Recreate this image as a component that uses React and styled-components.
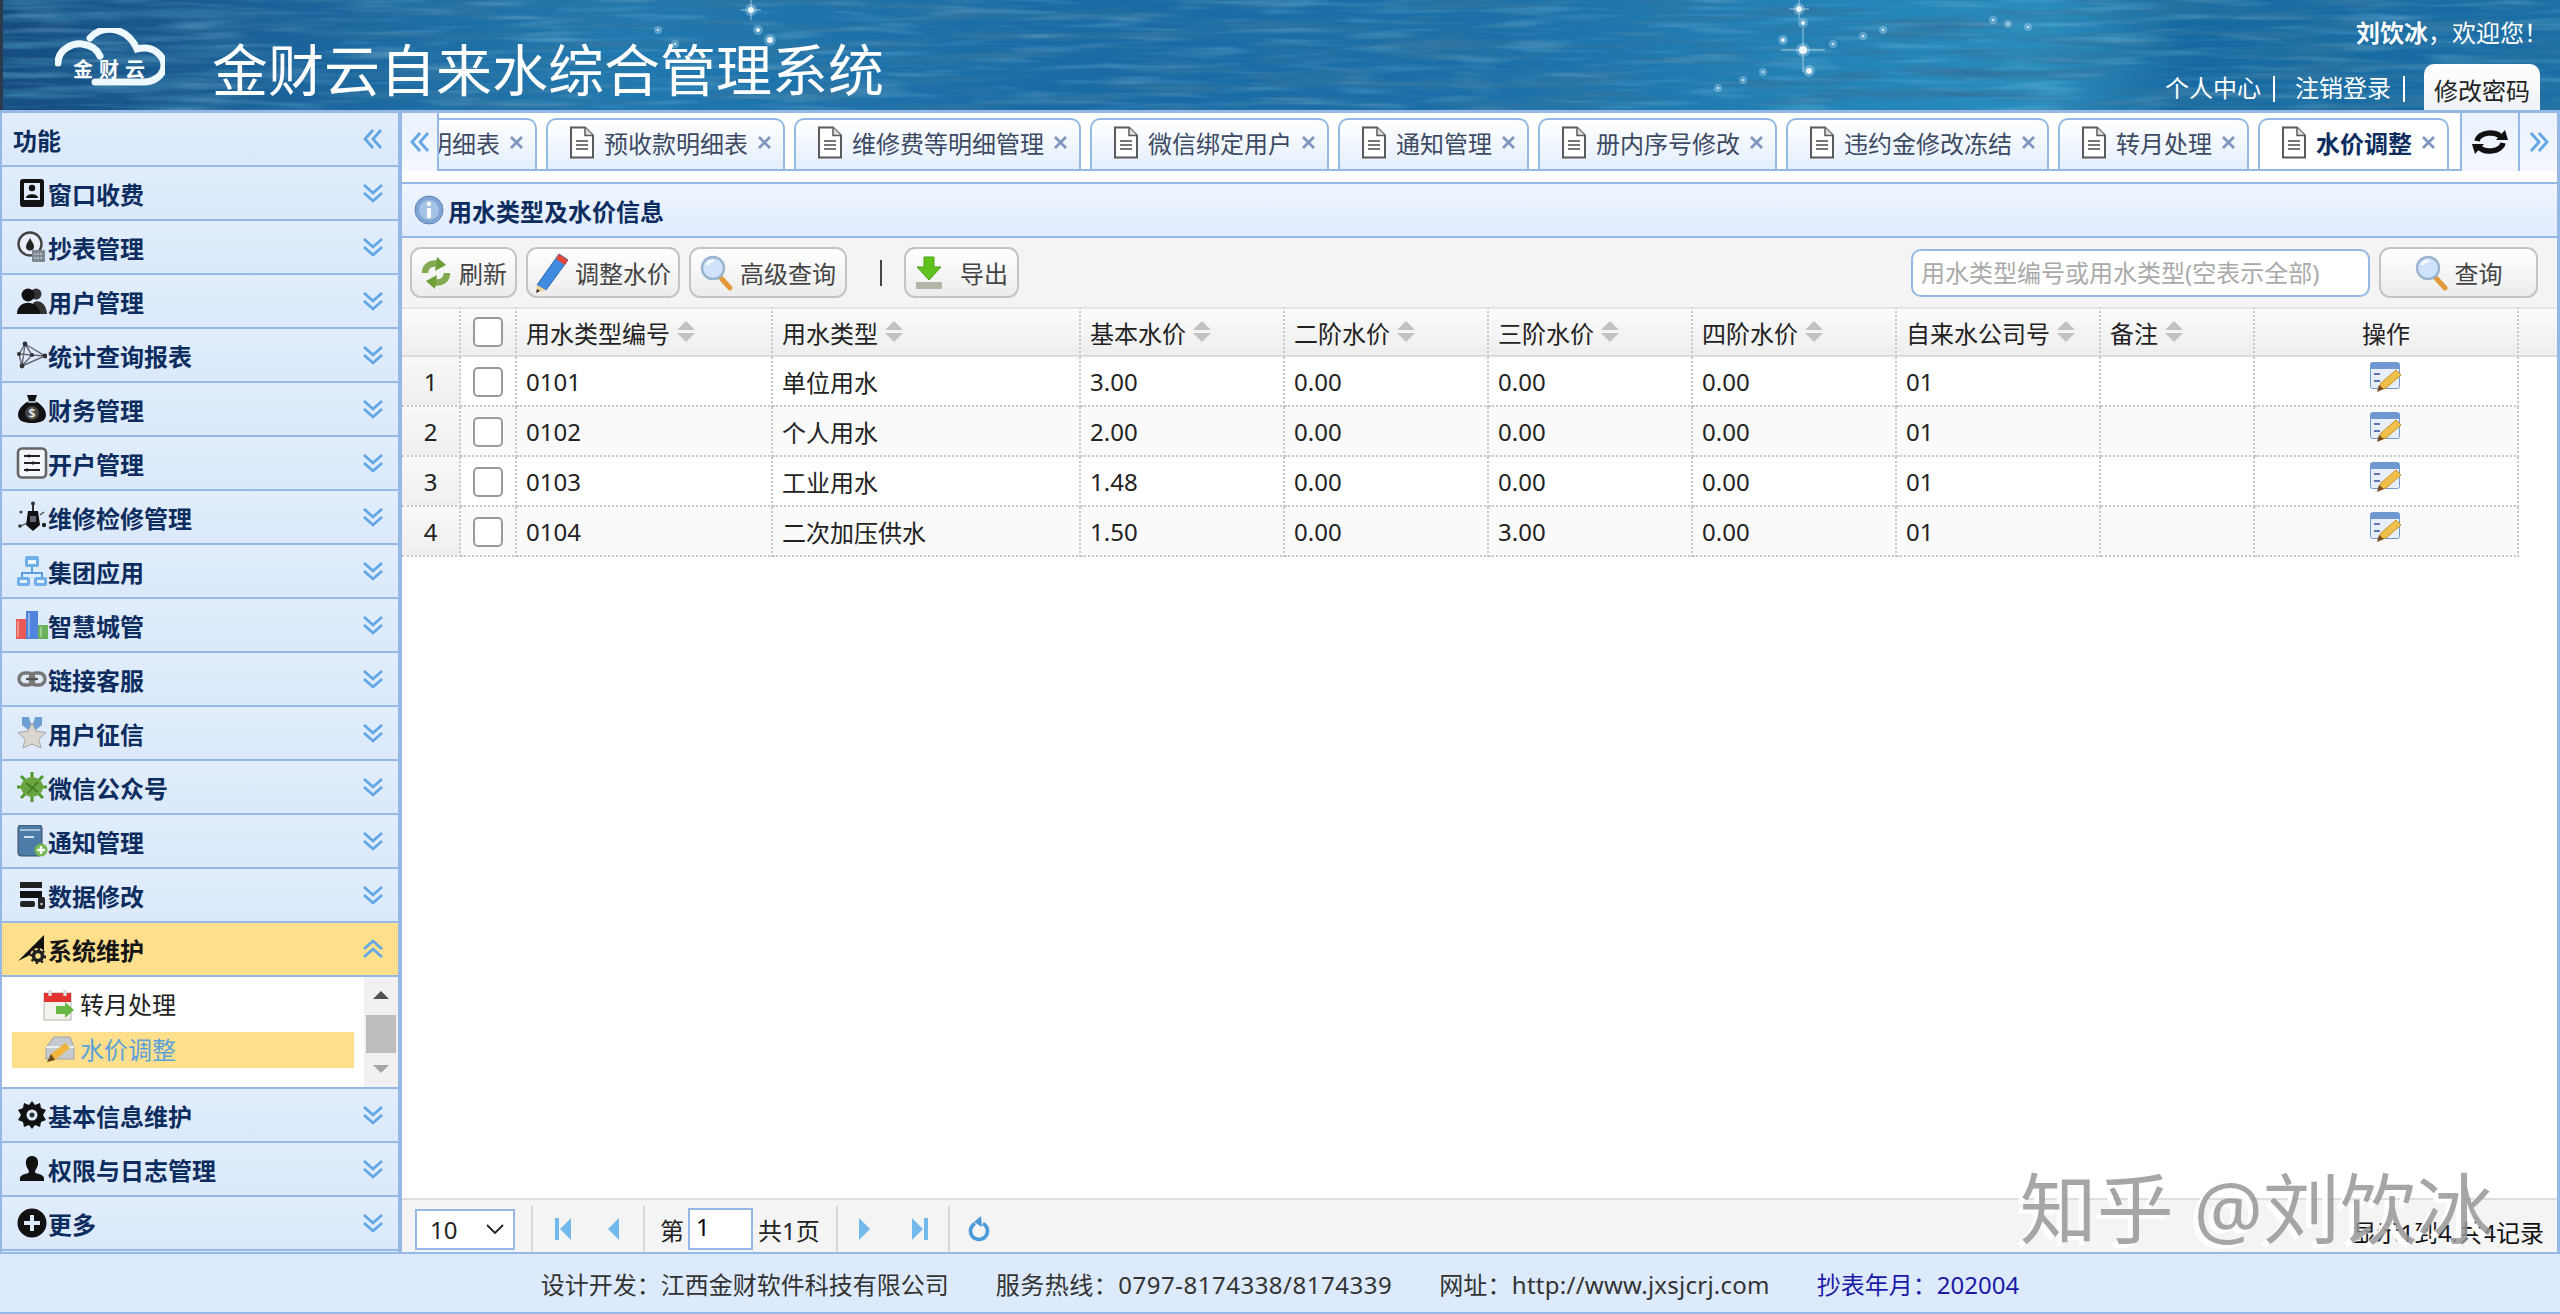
import React from "react";
import styled, { createGlobalStyle } from "styled-components";

const BORDER = "#95b8e7";
const NAVY = "#0e2d5f";

const GlobalStyle = createGlobalStyle`
  html, body {
    margin: 0;
    padding: 0;
    height: 100%;
    overflow: hidden;
  }
  body {
    font-family: "Noto Sans", "Noto Sans CJK SC", sans-serif;
    font-size: 24px;
    color: #222;
  }
  * {
    box-sizing: border-box;
  }
`;

const Page = styled.div`
  position: relative;
  display: flex;
  flex-direction: column;
  width: 2560px;
  height: 1314px;
  overflow: hidden;
`;

/* header */
const Header = styled.header`
  position: relative;
  flex: none;
  display: flex;
  justify-content: space-between;
  height: 110px;
  border-left: 3px solid #2c3b4c;
  overflow: hidden;
`;
const Water = styled.svg`
  position: absolute;
  left: 0;
  top: 0;
`;
const Brand = styled.div`
  position: relative;
  display: flex;
  align-items: flex-start;
  padding: 28px 0 0 52px;
`;
const Title = styled.h1`
  margin: 6px 0 0 47px;
  font-size: 56px;
  line-height: 70px;
  font-weight: 400;
  color: #fff;
  white-space: nowrap;
`;
const UserBox = styled.div`
  position: relative;
  display: flex;
  flex-direction: column;
  align-items: flex-end;
  padding: 16px 20px 0 0;
`;
const Welcome = styled.div`
  height: 34px;
  margin-right: -8px;
  line-height: 34px;
  color: #fff;
  b {
    font-weight: 700;
  }
`;
const UserLinks = styled.div`
  display: flex;
  align-items: flex-end;
  margin-top: 14px;
  color: #fff;
`;
const UserLink = styled.span`
  height: 46px;
  line-height: 48px;
  white-space: pre;
`;
const LinkBar = styled.i`
  width: 2px;
  height: 26px;
  margin: 0 20px 8px 12px;
  background: #fff;
`;
const PasswordTab = styled.span`
  width: 116px;
  height: 46px;
  margin-left: -1px;
  line-height: 54px;
  text-align: center;
  color: #222;
  background: linear-gradient(#fff, #eef2f6);
  border-radius: 10px 10px 0 0;
`;

/* body */
const Body = styled.div`
  flex: 1;
  display: flex;
  min-height: 0;
`;
const Sidebar = styled.nav`
  flex: none;
  width: 402px;
  background: #dceafc;
  border-top: 3px solid ${BORDER};
  border-left: 2px solid ${BORDER};
  border-right: 4px solid ${BORDER};
`;
const NavRow = styled.div`
  display: flex;
  align-items: center;
  height: 54px;
  padding: 0 14px 0 ${(p) => (p.$title ? "11px" : "13px")};
  background: ${(p) => (p.$active ? "#ffdf8b" : "linear-gradient(#e1edfc, #dbe9fb)")};
  border-bottom: 2px solid ${BORDER};
  color: ${(p) => (p.$active ? "#151515" : NAVY)};
  font-weight: 700;
`;
const NavIcon = styled.span`
  flex: none;
  display: flex;
  justify-content: center;
  width: 33px;
`;
const NavLabel = styled.span`
  flex: 1;
`;
const SubPanel = styled.div`
  display: flex;
  height: 112px;
  background: #fff;
  border-bottom: 2px solid ${BORDER};
`;
const SubList = styled.div`
  flex: 1;
  padding: 10px 10px 0 10px;
`;
const SubItem = styled.div`
  display: flex;
  align-items: center;
  height: 36px;
  margin-bottom: 9px;
  padding: 0 0 3px 31px;
  background: ${(p) => (p.$active ? "#ffdf8b" : "transparent")};
  color: ${(p) => (p.$active ? "#5aa2dc" : "#222")};
`;
const SubIcon = styled.span`
  display: flex;
  width: 37px;
  margin-bottom: -3px;
`;
const ScrollTrack = styled.div`
  flex: none;
  display: flex;
  flex-direction: column;
  align-items: center;
  width: 34px;
  padding: 14px 2px 0;
  background: #f1f1f1;
`;
const ScrollArrow = styled.i`
  width: 0;
  height: 0;
  border-left: 8px solid transparent;
  border-right: 8px solid transparent;
  border-bottom: ${(p) => (p.$down ? "0" : "8px solid #505050")};
  border-top: ${(p) => (p.$down ? "8px solid #a5a5a5" : "0")};
`;
const ScrollThumb = styled.i`
  width: 30px;
  height: 38px;
  margin: 16px 0 12px;
  background: #bdbdbd;
`;

/* main column */
const Main = styled.main`
  flex: 1;
  min-width: 0;
  display: flex;
  flex-direction: column;
  background: #fff;
  border-top: 3px solid ${BORDER};
  border-right: 3px solid ${BORDER};
`;
const TabStrip = styled.div`
  flex: none;
  display: flex;
  height: 58px;
  border-bottom: 2px solid ${BORDER};
`;
const Scroller = styled.div`
  flex: none;
  display: flex;
  align-items: center;
  justify-content: center;
  width: ${(p) => p.$w}px;
  margin-bottom: -2px;
  background: linear-gradient(#eaf2fe, #f4f8fe);
  border-${(p) => p.$edge}: 2px solid ${BORDER};
`;
const TabClip = styled.div`
  flex: 1;
  min-width: 0;
  display: flex;
  align-items: flex-end;
  gap: 9px;
  padding-top: 5px;
  overflow: hidden;
`;
const Tab = styled.div`
  flex: none;
  display: flex;
  align-items: center;
  height: 53px;
  margin-bottom: -2px;
  padding: 0 11px 4px 21px;
  color: ${(p) => (p.$active ? NAVY : "#3d4a63")};
  font-weight: ${(p) => (p.$active ? 700 : 400)};
  background: ${(p) => (p.$active ? "#fff" : "linear-gradient(#fff, #e3eefc)")};
  border: 2px solid ${BORDER};
  border-bottom: 2px solid ${(p) => (p.$active ? "#fff" : BORDER)};
  border-radius: 10px 10px 0 0;
  white-space: nowrap;
`;
const ClippedTab = styled(Tab)`
  justify-content: flex-end;
  width: 98px;
  padding-left: 0;
  border-left: 0;
  border-top-left-radius: 0;
  span {
    flex: none;
    margin-left: -40px;
  }
`;
const TabText = styled.span`
  margin: 0 9px;
`;
const ClippedClose = styled.i`
  display: flex;
  margin-left: 9px;
`;

const Panel = styled.section`
  flex: 1;
  min-height: 0;
  display: flex;
  flex-direction: column;
  margin-top: 11px;
`;
const PanelTitle = styled.div`
  flex: none;
  display: flex;
  align-items: center;
  gap: 4px;
  height: 56px;
  padding-left: 12px;
  background: linear-gradient(#eff5ff, #e0ecff);
  border-top: 2px solid ${BORDER};
  border-bottom: 2px solid ${BORDER};
  color: ${NAVY};
  font-weight: 700;
`;
const Toolbar = styled.div`
  flex: none;
  display: flex;
  align-items: center;
  gap: 9px;
  height: 69px;
  padding: 0 19px 0 8px;
  background: #f4f4f4;
`;
const ToolButton = styled.button`
  display: flex;
  align-items: center;
  justify-content: center;
  gap: ${(p) => p.$gap}px;
  width: ${(p) => p.$w}px;
  height: 51px;
  padding: 0;
  font: inherit;
  color: #444;
  background: linear-gradient(#fff, #ececec);
  border: 2px solid #c4c4c4;
  border-radius: 11px;
`;
const ToolSep = styled.i`
  width: 2px;
  height: 26px;
  margin: 0 13px 0 24px;
  background: #444;
`;
const SearchInput = styled.input`
  width: 459px;
  height: 48px;
  margin-left: auto;
  padding: 0 8px;
  font: inherit;
  background: #fff;
  border: 2px solid ${BORDER};
  border-radius: 10px;
  outline: none;
  &::placeholder {
    color: #aaa;
    opacity: 1;
  }
`;

const TableArea = styled.div`
  flex: 1;
  min-height: 0;
`;
const Grid = styled.table`
  table-layout: fixed;
  width: 2155px;
  border-collapse: separate;
  border-spacing: 0;
`;
const HeadCell = styled.th`
  height: 50px;
  padding: 0 0 0 ${(p) => (p.$flush ? "0" : "9px")};
  font-weight: 400;
  text-align: left;
  background: linear-gradient(#fbfbfb, #eeeeee);
  border-top: 2px solid #e4e4e4;
  border-bottom: 2px solid #dcdcdc;
  border-right: ${(p) => (p.$plain ? "0" : "2px dotted #c8c8c8")};
`;
const HeadInner = styled.div`
  display: flex;
  align-items: center;
  justify-content: ${(p) => (p.$center ? "center" : "flex-start")};
  gap: 7px;
  white-space: nowrap;
`;
const SortMark = styled.span`
  display: flex;
  flex-direction: column;
  gap: 3px;
  margin-top: -2px;
  &::before,
  &::after {
    content: "";
    width: 0;
    height: 0;
    border-left: 9px solid transparent;
    border-right: 9px solid transparent;
  }
  &::before {
    border-bottom: 9px solid #c2c2c2;
  }
  &::after {
    border-top: 9px solid #c2c2c2;
  }
`;
const Cell = styled.td`
  height: 50px;
  padding: 0 0 0 9px;
  background: ${(p) => (p.$odd ? "#fff" : "#fafafa")};
  border-bottom: 2px dotted #c8c8c8;
  border-right: 2px dotted #c8c8c8;
`;
const NumCell = styled(Cell)`
  padding: 0;
  text-align: center;
  background: linear-gradient(#f8f8f8, #efefef);
`;
const BoxCell = styled(Cell)`
  padding: 2px 0 0;
  text-align: center;
`;
const Check = styled.input.attrs({ type: "checkbox" })`
  appearance: none;
  display: block;
  width: 30px;
  height: 30px;
  margin: 0 auto;
  background: #fff;
  border: 2px solid #9a9a9a;
  border-radius: 5px;
`;
const ActionCell = styled(Cell)`
  padding: 0 0 8px;
  text-align: center;
`;

const Pager = styled.div`
  flex: none;
  display: flex;
  align-items: center;
  height: 54px;
  padding: 6px 13px 0 13px;
  background: #f4f4f4;
  border-top: 2px solid #dedede;
`;
const SizeBox = styled.div`
  position: relative;
  width: 100px;
  height: 41px;
  margin-right: 15px;
`;
const PageSize = styled.select`
  appearance: none;
  width: 100%;
  height: 100%;
  padding-left: 13px;
  font: inherit;
  color: #222;
  background: #fff;
  border: 2px solid ${BORDER};
  border-radius: 0;
  outline: none;
`;
const SizeCaret = styled.svg`
  position: absolute;
  right: 11px;
  top: 15px;
  pointer-events: none;
`;
const PagerSep = styled.i`
  align-self: stretch;
  width: 2px;
  margin: 0 3px 0 1px;
  background: #d8d8d8;
`;
const PagerBtn = styled.span`
  display: flex;
  align-items: center;
  justify-content: center;
  width: 53px;
`;
const PageNumbers = styled.div`
  display: flex;
  align-items: center;
  padding: 0 15px 0 12px;
`;
const PageInput = styled.input`
  width: 65px;
  height: 42px;
  margin: 0 5px 0 4px;
  padding: 0 0 6px 6px;
  font: inherit;
  background: #fff;
  border: 2px solid ${BORDER};
  outline: none;
`;
const RecordInfo = styled.span`
  margin: 4px 0 0 auto;
  color: #111;
`;

const Footer = styled.footer`
  flex: none;
  display: flex;
  align-items: center;
  justify-content: center;
  gap: 47px;
  height: 62px;
  color: #333;
  background: #dceafc;
  border-top: 2px solid ${BORDER};
  border-bottom: 2px solid ${BORDER};
`;
const FooterItem = styled.span`
  letter-spacing: ${(p) => p.$track || 0}px;
  color: ${(p) => (p.$month ? "#1a1aa6" : "inherit")};
`;
const Watermark = styled.div`
  position: absolute;
  right: 66px;
  top: 1161px;
  font-size: 77px;
  line-height: 96px;
  color: rgba(150, 150, 150, 0.85);
  text-shadow: -5px 4px 0 #fff;
  white-space: pre;
  pointer-events: none;
`;

/* drawings */
const Sparkle = ({ x, y, r = 3, arm = 14 }) => (
  <g>
    <circle cx={x} cy={y} r={r + 3} fill="#bfe6ff" opacity="0.35" />
    <circle cx={x} cy={y} r={r} fill="#fff" opacity="0.9" />
    {arm > 8 && <path d={`M${x - arm} ${y}H${x + arm}M${x} ${y - arm}V${y + arm}`} stroke="#e6f6ff" strokeWidth="1" opacity="0.6" />}
  </g>
);

const sparkles = [
  [748, 10, 3, 10], [755, 30, 2, 6], [767, 40, 3, 6], [655, 30, 1, 4], [672, 44, 1, 4],
  [1796, 9, 3, 10], [1800, 23, 2, 6], [1780, 40, 2, 6], [1800, 50, 4, 22], [1806, 71, 3, 6], [1830, 44, 1, 5],
  [1860, 36, 1, 5], [1880, 30, 1, 4], [1760, 72, 1, 4], [1740, 80, 1, 4], [1715, 88, 1, 4],
  [1990, 20, 1, 3], [2005, 24, 1, 3], [2025, 27, 1, 3],
];

const WaterBackdrop = () => (
  <Water width="2560" height="110" viewBox="0 0 2560 110" aria-hidden="true">
    <defs>
      <linearGradient id="sea" x1="0" x2="1" y1="0" y2="0">
        <stop offset="0" stopColor="#164c7f" />
        <stop offset="0.1" stopColor="#1a6199" />
        <stop offset="0.24" stopColor="#2079b0" />
        <stop offset="0.42" stopColor="#1a6aa4" />
        <stop offset="0.58" stopColor="#1b6fa8" />
        <stop offset="0.7" stopColor="#2282b6" />
        <stop offset="0.8" stopColor="#2a8dbd" />
        <stop offset="0.85" stopColor="#176aa1" />
        <stop offset="1" stopColor="#1a6ea5" />
      </linearGradient>
      <filter id="ripple" x="0" y="0" width="100%" height="100%">
        <feTurbulence type="fractalNoise" baseFrequency="0.008 0.1" numOctaves="3" seed="11" />
        <feColorMatrix values="0 0 0 0 0.03  0 0 0 0 0.18  0 0 0 0 0.36  2.4 0 0 0 -1.0" />
      </filter>
      <filter id="glint" x="0" y="0" width="100%" height="100%">
        <feTurbulence type="fractalNoise" baseFrequency="0.012 0.14" numOctaves="2" seed="4" />
        <feColorMatrix values="0 0 0 0 0.4  0 0 0 0 0.72  0 0 0 0 0.88  0 2.2 0 0 -1.1" />
      </filter>
    </defs>
    <rect width="2560" height="110" fill="url(#sea)" />
    <rect width="2560" height="110" filter="url(#ripple)" />
    <rect width="2560" height="110" filter="url(#glint)" opacity="0.3" />
    {sparkles.map(([x, y, r, arm]) => (
      <Sparkle key={`${x}-${y}`} x={x} y={y} r={r} arm={arm} />
    ))}
  </Water>
);

const CloudLogo = () => (
  <svg width="110" height="59" viewBox="15 8 110 59" style={{ flex: "none" }}>
    <g fill="none" stroke="#eef8ff" strokeWidth="7" strokeLinecap="round">
      <path d="M18 43C18 29 33 23 42 24C50 25 57 29 60 36" />
      <path d="M50 18C61 5 86 5 97 29C115 24 124 38 124 45C124 56 113 62 104 62H55" />
    </g>
    <text x="33" y="57" fill="#fff" fontSize="20" fontWeight="700" fontFamily="'Noto Sans CJK SC', sans-serif" letterSpacing="6">
      金财云
    </text>
  </svg>
);

const DoubleChevron = ({ dir = "down" }) => {
  const angle = { down: 0, up: 180, left: 90, right: 270 }[dir];
  return (
    <svg width="22" height="22" viewBox="0 0 22 22" style={{ flex: "none" }}>
      <g transform={`rotate(${angle} 11 11)`} fill="none" stroke="#62a6e6" strokeWidth="2.800">
        <path d="M2 3L11 11L20 3" />
        <path d="M2 11L11 19L20 11" />
      </g>
    </svg>
  );
};

const IconWindow = () => (
  <svg width="30" height="30" viewBox="0 0 30 30">
    <rect x="3" y="1" width="24" height="28" rx="3" fill="#111" />
    <rect x="7" y="5" width="16" height="17" fill="#e0ebfb" />
    <circle cx="15" cy="10" r="3.200" fill="#111" />
    <path d="M9 20C9 15 21 15 21 20Z" fill="#111" />
  </svg>
);
const IconMeter = () => (
  <svg width="30" height="32" viewBox="0 0 30 32">
    <circle cx="13" cy="13" r="11.500" fill="#e8eefa" stroke="#444" strokeWidth="2.400" />
    <path d="M13 7C15 11 17 13 17 15.500A4 4 0 0 1 9 15.500C9 13 11 11 13 7Z" fill="#222" />
    <rect x="15" y="19" width="13" height="12" rx="1" fill="#7f8790" />
    <path d="M17 23H26M17 27H26" stroke="#c5ccd6" strokeWidth="1.600" strokeDasharray="2 1" />
  </svg>
);
const IconUsers = () => (
  <svg width="30" height="28" viewBox="0 0 30 28">
    <circle cx="19" cy="7" r="5.500" fill="#333" />
    <path d="M16 16C20 12 29 14 30 27H22Z" fill="#333" />
    <circle cx="11" cy="8" r="6.500" fill="#111" />
    <path d="M0 27C0 12 22 12 23 27Z" fill="#111" />
  </svg>
);
const IconNetwork = () => (
  <svg width="30" height="28" viewBox="0 0 30 28">
    <g fill="none" stroke="#667" strokeWidth="1.400">
      <path d="M8 3L28 15L5 25ZM8 3L15 14L5 25M15 14L28 15M2 13L15 14M8 3L2 13L5 25" />
    </g>
    <g fill="#333">
      <circle cx="8" cy="3" r="2.400" />
      <circle cx="28" cy="15" r="2.400" />
      <circle cx="5" cy="25" r="2.400" />
      <circle cx="2" cy="13" r="2" />
      <circle cx="15" cy="14" r="2" />
    </g>
  </svg>
);
const IconMoney = () => (
  <svg width="30" height="30" viewBox="0 0 30 30">
    <path d="M10 1H20L18 7C24 10 29 15 29 21C29 27 23 29 15 29C7 29 1 27 1 21C1 15 6 10 12 7Z" fill="#111" />
    <path d="M11 8H19" stroke="#dce9fb" strokeWidth="1.400" />
    <circle cx="15" cy="19" r="7" fill="#444" />
    <text x="15" y="24" fontSize="13" fontWeight="700" fill="#ddd" textAnchor="middle">$</text>
  </svg>
);
const IconList = () => (
  <svg width="32" height="32" viewBox="0 0 32 32">
    <rect x="2" y="1.500" width="28" height="29" rx="4" fill="#f4f7fc" stroke="#666" strokeWidth="2.600" />
    <path d="M8 9H24M8 16H24M8 23H24" stroke="#222" strokeWidth="2" />
    <path d="M13 7.500V10.500M17 14.500V17.500M11 21.500V24.500" stroke="#222" strokeWidth="2" />
  </svg>
);
const IconRepair = () => (
  <svg width="30" height="32" viewBox="0 0 30 32">
    <path d="M11 10H21L23 24L16 30L9 24Z" fill="#111" />
    <rect x="13" y="15" width="6" height="6" fill="#667" />
    <path d="M16 1V10" stroke="#333" strokeWidth="2" />
    <circle cx="16" cy="2.500" r="2" fill="#333" />
    <circle cx="4" cy="11" r="1.600" fill="#444" />
    <circle cx="27" cy="24" r="2.200" fill="#222" />
    <circle cx="3" cy="25" r="1.800" fill="#333" />
    <path d="M4 25L10 22M23 14L27 11" stroke="#444" strokeWidth="1.200" />
  </svg>
);
const IconOrg = () => (
  <svg width="32" height="32" viewBox="0 0 32 32">
    <path d="M16 12V18M6 24V18H26V24" fill="none" stroke="#5a9fe0" strokeWidth="2" />
    <rect x="9" y="1" width="14" height="11" rx="2" fill="#6fb0ec" />
    <rect x="12" y="5" width="8" height="4" fill="#eaf4ff" />
    <rect x="1" y="22" width="13" height="9" rx="2" fill="#6fb0ec" />
    <rect x="4" y="25" width="7" height="3" fill="#eaf4ff" />
    <rect x="18" y="22" width="13" height="9" rx="2" fill="#6fb0ec" />
    <rect x="21" y="25" width="7" height="3" fill="#eaf4ff" />
  </svg>
);
const IconBars = () => (
  <svg width="32" height="28" viewBox="0 0 32 28">
    <rect x="0" y="8" width="10" height="20" fill="#ea5a55" />
    <rect x="10" y="0" width="12" height="28" fill="#4f86dc" />
    <rect x="22" y="14" width="10" height="14" fill="#6cb25c" />
    <path d="M2 10V26M13 2V26M25 16V26" stroke="#fff" strokeWidth="1.500" opacity="0.45" />
  </svg>
);
const IconChain = () => (
  <svg width="30" height="16" viewBox="0 0 30 16">
    <g fill="none" stroke="#777" strokeWidth="3.400">
      <rect x="2" y="2" width="15" height="12" rx="6" />
      <rect x="13" y="2" width="15" height="12" rx="6" />
    </g>
    <path d="M9 8H21" stroke="#555" strokeWidth="2" />
  </svg>
);
const IconMedal = () => (
  <svg width="30" height="32" viewBox="0 0 30 32">
    <path d="M5 0H12L15 10L18 0H25V8L15 16L5 8Z" fill="#6f9ed6" />
    <path d="M15 6L19 14L29 15.500L22 22.500L24 31L15 27L6 31L8 22.500L1 15.500L11 14Z" fill="#d9d5cf" stroke="#a8a6a2" strokeWidth="1" />
  </svg>
);
const IconBug = () => (
  <svg width="32" height="32" viewBox="0 0 32 32">
    <path d="M16 1V31M1 16H31M5 5L27 27M27 5L5 27" stroke="#4e9a2c" strokeWidth="3" />
    <ellipse cx="16" cy="16" rx="11" ry="10" fill="#6aa53f" />
    <path d="M10 12L22 21M12 22L22 11" stroke="#3f7c22" strokeWidth="1.600" />
  </svg>
);
const IconBook = () => (
  <svg width="32" height="32" viewBox="0 0 32 32">
    <rect x="2" y="0" width="24" height="31" rx="3" fill="#4d7ca8" stroke="#3c4c60" strokeWidth="1" />
    <path d="M4 5H24" stroke="#a7c2da" strokeWidth="2" />
    <rect x="8" y="11" width="10" height="2" fill="#cfe0ee" />
    <circle cx="25" cy="25" r="6.500" fill="#74b84f" />
    <path d="M25 21V29M21 25H29" stroke="#fff" strokeWidth="2.400" />
  </svg>
);
const IconServer = () => (
  <svg width="30" height="30" viewBox="0 0 30 30">
    <rect x="3" y="2" width="22" height="6" fill="#222" />
    <rect x="3" y="11" width="22" height="7" fill="#111" />
    <rect x="3" y="21" width="15" height="6" rx="2" fill="#222" />
    <rect x="21" y="17" width="7" height="12" rx="2" fill="#222" />
    <circle cx="24.500" cy="24" r="1.200" fill="#ddd" />
  </svg>
);
const IconTools = () => (
  <svg width="30" height="30" viewBox="0 0 30 30">
    <path d="M27 1V19L15 20L1 27Z" fill="#111" />
    <circle cx="21" cy="22" r="8" fill="#ffdf8b" />
    <circle cx="21" cy="22" r="4.500" fill="none" stroke="#222" strokeWidth="3.600" />
    <circle cx="21" cy="22" r="7" fill="none" stroke="#222" strokeWidth="2.200" strokeDasharray="2.400 3" />
  </svg>
);
const IconGear = () => (
  <svg width="30" height="30" viewBox="0 0 30 30">
    <path
      d="M15 1L18 5L23 3L24 8L29 10L26 15L29 20L24 22L23 27L18 25L15 29L12 25L7 27L6 22L1 20L4 15L1 10L6 8L7 3L12 5Z"
      fill="#111"
    />
    <circle cx="15" cy="15" r="5.500" fill="#dce9fb" />
    <circle cx="15" cy="15" r="2.500" fill="#333" />
  </svg>
);
const IconPerson = () => (
  <svg width="26" height="26" viewBox="0 0 26 26">
    <path d="M13 0C18 0 19.500 4 19 8C18.500 12 16 14 16 16C16 18 25 18 25 22V25H1V22C1 18 10 18 10 16C10 14 7.500 12 7 8C6.500 4 8 0 13 0Z" fill="#111" />
  </svg>
);
const IconPlus = () => (
  <svg width="30" height="30" viewBox="0 0 30 30">
    <circle cx="15" cy="15" r="14.500" fill="#111" />
    <path d="M15 7V23M7 15H23" stroke="#dce9fb" strokeWidth="4" />
  </svg>
);

const IconCalendar = () => (
  <svg width="32" height="32" viewBox="0 0 32 32">
    <rect x="1" y="4" width="27" height="27" fill="#f3f3ee" stroke="#b5b5b0" />
    <rect x="1" y="4" width="27" height="9" fill="#e2342f" />
    <path d="M7 1V7M22 1V7" stroke="#ddd" strokeWidth="3.400" />
    <path d="M13 17H22V13L31 21L22 29V25H13Z" fill="#68b845" />
  </svg>
);
const IconPriceEdit = () => (
  <svg width="32" height="30" viewBox="0 0 32 30">
    <path d="M3 12L11 2H27L31 12V24H3Z" fill="#c6c9cd" stroke="#a0a4a8" />
    <path d="M3 12H31" stroke="#eee" strokeWidth="2" />
    <path d="M4 27L8 19L22 8L27 13L12 25Z" fill="#efb53c" />
    <path d="M4 27L8 19L12 25Z" fill="#6b4a20" />
  </svg>
);
const IconDoc = () => (
  <svg width="26" height="33" viewBox="0 0 26 33" style={{ flex: "none" }}>
    <path d="M2 1.500H16L24 9.500V31.500H2Z" fill="#fff" stroke="#5a5a5a" strokeWidth="2" />
    <path d="M16 1.500V9.500H24" fill="#ddd" stroke="#5a5a5a" strokeWidth="1.500" />
    <path d="M7 15H19M7 19H19M7 23H19" stroke="#777" strokeWidth="1.800" />
  </svg>
);
const IconClose = () => (
  <svg width="15" height="15" viewBox="0 0 15 15" style={{ flex: "none" }}>
    <path d="M2 2L13 13M13 2L2 13" stroke="#7d95bd" strokeWidth="2.600" />
  </svg>
);
const IconCycle = () => (
  <svg width="36" height="26" viewBox="0 0 36 26">
    <g fill="none" stroke="#111" strokeWidth="5.500">
      <path d="M5 12C7 3 24 1 30 9" />
      <path d="M31 14C29 23 12 25 6 17" />
    </g>
    <path d="M24 11L36 11L33 1Z" fill="#111" />
    <path d="M12 15L0 15L3 25Z" fill="#111" />
  </svg>
);
const IconInfo = () => (
  <svg width="30" height="30" viewBox="0 0 30 30" style={{ flex: "none" }}>
    <circle cx="15" cy="15" r="14" fill="#7ea5d3" stroke="#5e86b8" />
    <circle cx="15" cy="15" r="10" fill="#a5c3e4" />
    <circle cx="15" cy="9" r="2.200" fill="#fff" />
    <rect x="13" y="13" width="4" height="10" fill="#fff" />
  </svg>
);
const IconRefresh = () => (
  <svg width="32" height="34" viewBox="0 0 32 34">
    <g fill="none" stroke="#84ab52" strokeWidth="6.500">
      <path d="M5 17C5 10 11 6 19 8" />
      <path d="M27 17C27 24 21 28 13 26" />
    </g>
    <path d="M17 1L26 9L15 15Z" fill="#6d9e38" />
    <path d="M15 33L6 25L17 19Z" fill="#6d9e38" />
  </svg>
);
const IconPencil = () => (
  <svg width="34" height="42" viewBox="0 0 34 42">
    <path d="M24 2L33 8L11 38L2 33Z" fill="#3f8be0" stroke="#2a67b4" />
    <path d="M24 2L33 8L30 13L21 7Z" fill="#e5483a" />
    <path d="M2 33L11 38L1 41Z" fill="#f0d29a" />
    <path d="M2 37L5 39L1 41Z" fill="#333" />
  </svg>
);
const IconSearch = () => (
  <svg width="34" height="36" viewBox="0 0 34 36" style={{ flex: "none" }}>
    <path d="M20 22L30 33" stroke="#e39a3a" strokeWidth="5" strokeLinecap="round" />
    <circle cx="13" cy="13" r="11" fill="#cfe4fa" stroke="#9ab4cf" strokeWidth="2.400" />
    <path d="M7 10C8 7 11 6 14 6" stroke="#fff" strokeWidth="2.400" fill="none" />
  </svg>
);
const IconExport = () => (
  <svg width="28" height="34" viewBox="0 0 28 34">
    <path d="M9 1H19V11H26L14 24L2 11H9Z" fill="#5fc21e" stroke="#4ba012" />
    <rect x="1" y="26" width="26" height="7" rx="1" fill="#b5b5a8" />
  </svg>
);
const IconRowEdit = () => (
  <svg width="32" height="30" viewBox="0 0 32 30" style={{ display: "block", margin: "0 auto" }}>
    <rect x="0.500" y="0.500" width="29" height="26" rx="2" fill="#e8eefa" stroke="#6f98d0" />
    <rect x="1" y="1" width="28" height="6" fill="#6f98d0" />
    <rect x="4" y="11" width="6" height="2" fill="#6176b0" />
    <rect x="4" y="18" width="6" height="2" fill="#6176b0" />
    <path d="M8 28L11 21L26 8L31 13L16 26Z" fill="#f0c04c" stroke="#c8922c" />
    <path d="M7 30L9 23L14 27Z" fill="#7a4c1e" />
  </svg>
);
const PagerGlyph = ({ kind }) => {
  const blue = "#72b8ea";
  const shapes = {
    first: "M0 1H4V23H0ZM16 1V23L5 12Z",
    prev: "M11 1V23L0 12Z",
    next: "M0 1V23L11 12Z",
    last: "M0 1V23L11 12ZM12 1H16V23H12Z",
  };
  return (
    <svg width="16" height="24" viewBox="0 0 16 24">
      <path d={shapes[kind]} fill={blue} />
    </svg>
  );
};
const IconReload = () => (
  <svg width="22" height="26" viewBox="0 0 22 26">
    <path d="M7 7.500A8.500 8.500 0 1 0 15 7.500" fill="none" stroke="#4a9ad8" strokeWidth="3.600" />
    <path d="M13 0L14 11L6 6Z" fill="#4a9ad8" />
  </svg>
);

const navTop = [
  ["窗口收费", IconWindow],
  ["抄表管理", IconMeter],
  ["用户管理", IconUsers],
  ["统计查询报表", IconNetwork],
  ["财务管理", IconMoney],
  ["开户管理", IconList],
  ["维修检修管理", IconRepair],
  ["集团应用", IconOrg],
  ["智慧城管", IconBars],
  ["链接客服", IconChain],
  ["用户征信", IconMedal],
  ["微信公众号", IconBug],
  ["通知管理", IconBook],
  ["数据修改", IconServer],
];
const navBottom = [
  ["基本信息维护", IconGear],
  ["权限与日志管理", IconPerson],
  ["更多", IconPlus],
];

const tabs = ["预收款明细表", "维修费等明细管理", "微信绑定用户", "通知管理", "册内序号修改", "违约金修改冻结", "转月处理"];

const columns = [
  ["用水类型编号", 256],
  ["用水类型", 308],
  ["基本水价", 204],
  ["二阶水价", 204],
  ["三阶水价", 204],
  ["四阶水价", 204],
  ["自来水公司号", 204],
  ["备注", 154],
];

const rows = [
  ["0101", "单位用水", "3.00", "0.00", "0.00", "0.00", "01", ""],
  ["0102", "个人用水", "2.00", "0.00", "0.00", "0.00", "01", ""],
  ["0103", "工业用水", "1.48", "0.00", "0.00", "0.00", "01", ""],
  ["0104", "二次加压供水", "1.50", "0.00", "3.00", "0.00", "01", ""],
];

const NavItem = ({ label, Icon }) => (
  <NavRow>
    <NavIcon>
      <Icon />
    </NavIcon>
    <NavLabel>{label}</NavLabel>
    <DoubleChevron />
  </NavRow>
);

export default function App() {
  return (
    <Page>
      <GlobalStyle />
      <Header>
        <WaterBackdrop />
        <Brand>
          <CloudLogo />
          <Title>金财云自来水综合管理系统</Title>
        </Brand>
        <UserBox>
          <Welcome>
            <b>刘饮冰</b>，欢迎您！
          </Welcome>
          <UserLinks>
            <UserLink>个人中心</UserLink>
            <LinkBar />
            <UserLink>注销登录</UserLink>
            <LinkBar />
            <PasswordTab>修改密码</PasswordTab>
          </UserLinks>
        </UserBox>
      </Header>

      <Body>
        <Sidebar>
          <NavRow $title>
            <NavLabel>功能</NavLabel>
            <DoubleChevron dir="left" />
          </NavRow>
          {navTop.map(([label, Icon]) => (
            <NavItem key={label} label={label} Icon={Icon} />
          ))}
          <NavRow $active>
            <NavIcon>
              <IconTools />
            </NavIcon>
            <NavLabel>系统维护</NavLabel>
            <DoubleChevron dir="up" />
          </NavRow>
          <SubPanel>
            <SubList>
              <SubItem>
                <SubIcon>
                  <IconCalendar />
                </SubIcon>
                转月处理
              </SubItem>
              <SubItem $active>
                <SubIcon>
                  <IconPriceEdit />
                </SubIcon>
                水价调整
              </SubItem>
            </SubList>
            <ScrollTrack>
              <ScrollArrow />
              <ScrollThumb />
              <ScrollArrow $down />
            </ScrollTrack>
          </SubPanel>
          {navBottom.map(([label, Icon]) => (
            <NavItem key={label} label={label} Icon={Icon} />
          ))}
        </Sidebar>

        <Main>
          <TabStrip>
            <Scroller $w={37} $edge="right">
              <DoubleChevron dir="left" />
            </Scroller>
            <TabClip>
              <ClippedTab>
                <span>明细表</span>
                <ClippedClose>
                  <IconClose />
                </ClippedClose>
              </ClippedTab>
              {tabs.map((name) => (
                <Tab key={name}>
                  <IconDoc />
                  <TabText>{name}</TabText>
                  <IconClose />
                </Tab>
              ))}
              <Tab $active>
                <IconDoc />
                <TabText>水价调整</TabText>
                <IconClose />
              </Tab>
            </TabClip>
            <Scroller $w={58} $edge="left">
              <IconCycle />
            </Scroller>
            <Scroller $w={39} $edge="left">
              <DoubleChevron dir="right" />
            </Scroller>
          </TabStrip>

          <Panel>
            <PanelTitle>
              <IconInfo />
              用水类型及水价信息
            </PanelTitle>
            <Toolbar>
              <ToolButton $w={107} $gap={7}>
                <IconRefresh />
                刷新
              </ToolButton>
              <ToolButton $w={154} $gap={6}>
                <IconPencil />
                调整水价
              </ToolButton>
              <ToolButton $w={158} $gap={6}>
                <IconSearch />
                高级查询
              </ToolButton>
              <ToolSep />
              <ToolButton $w={115} $gap={17}>
                <IconExport />
                导出
              </ToolButton>
              <SearchInput placeholder="用水类型编号或用水类型(空表示全部)" readOnly />
              <ToolButton $w={159} $gap={6}>
                <IconSearch />
                查询
              </ToolButton>
            </Toolbar>

            <TableArea>
              <Grid>
                <colgroup>
                  <col width="59" />
                  <col width="56" />
                  {columns.map(([name, width]) => (
                    <col key={name} width={width} />
                  ))}
                  <col width="264" />
                  <col width="38" />
                </colgroup>
                <thead>
                  <tr>
                    <HeadCell />
                    <HeadCell $flush>
                      <Check />
                    </HeadCell>
                    {columns.map(([name]) => (
                      <HeadCell key={name}>
                        <HeadInner>
                          {name}
                          <SortMark />
                        </HeadInner>
                      </HeadCell>
                    ))}
                    <HeadCell $flush>
                      <HeadInner $center>操作</HeadInner>
                    </HeadCell>
                    <HeadCell $plain />
                  </tr>
                </thead>
                <tbody>
                  {rows.map((row, i) => (
                    <tr key={row[0]}>
                      <NumCell $odd={i % 2 === 0}>{i + 1}</NumCell>
                      <BoxCell $odd={i % 2 === 0}>
                        <Check />
                      </BoxCell>
                      {row.map((value, j) => (
                        <Cell key={j} $odd={i % 2 === 0}>
                          {value}
                        </Cell>
                      ))}
                      <ActionCell $odd={i % 2 === 0}>
                        <IconRowEdit />
                      </ActionCell>
                    </tr>
                  ))}
                </tbody>
              </Grid>
            </TableArea>

            <Pager>
              <SizeBox>
                <PageSize defaultValue="10">
                  <option value="10">10</option>
                  <option value="20">20</option>
                </PageSize>
                <SizeCaret width="18" height="11" viewBox="0 0 18 11">
                  <path d="M1 1L9 9L17 1" fill="none" stroke="#222" strokeWidth="1.800" />
                </SizeCaret>
              </SizeBox>
              <PagerSep />
              <PagerBtn>
                <PagerGlyph kind="first" />
              </PagerBtn>
              <PagerBtn>
                <PagerGlyph kind="prev" />
              </PagerBtn>
              <PagerSep />
              <PageNumbers>
                第
                <PageInput defaultValue="1" />
                共1页
              </PageNumbers>
              <PagerSep />
              <PagerBtn>
                <PagerGlyph kind="next" />
              </PagerBtn>
              <PagerBtn>
                <PagerGlyph kind="last" />
              </PagerBtn>
              <PagerSep />
              <PagerBtn>
                <IconReload />
              </PagerBtn>
              <RecordInfo>显示1到4,共4记录</RecordInfo>
            </Pager>
          </Panel>
        </Main>
      </Body>

      <Footer>
        <FooterItem>设计开发：江西金财软件科技有限公司</FooterItem>
        <FooterItem $track={0.5}>服务热线：0797-8174338/8174339</FooterItem>
        <FooterItem $track={0.25}>网址：http://www.jxsjcrj.com</FooterItem>
        <FooterItem $month>抄表年月：202004</FooterItem>
      </Footer>

      <Watermark>知乎 @刘饮冰</Watermark>
    </Page>
  );
}
